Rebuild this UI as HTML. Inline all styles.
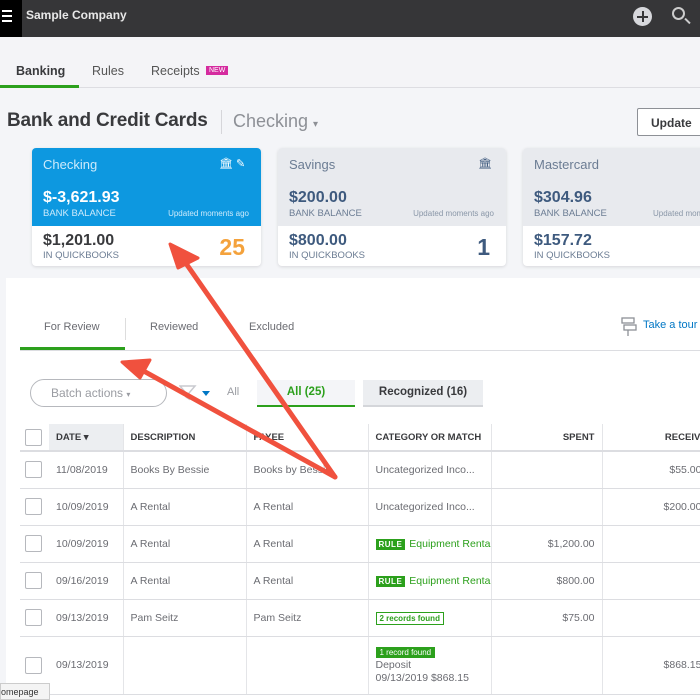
<!DOCTYPE html><html><head><style>
*{margin:0;padding:0;box-sizing:border-box}
html,body{width:700px;height:700px;overflow:hidden}
body{background:#f4f5f8;font-family:"Liberation Sans",sans-serif;position:relative;color:#393a3d}
.a{position:absolute}
.top{left:0;top:0;width:700px;height:37px;background:#363638}
.card{position:absolute;top:148px;height:118px;border-radius:4px;overflow:hidden;box-shadow:0 1px 3px rgba(0,0,0,.12);background:#fff}
.card .h{height:78px;background:#e8eaee;position:relative}
.card .t{position:absolute;left:11px;top:9px;font-size:13px;color:#6b7c93}
.card .b{position:absolute;left:11px;top:41px;font-size:16px;font-weight:bold;color:#3e5a7e}
.card .bl{position:absolute;left:11px;top:60px;font-size:9.5px;color:#6b7c93}
.card .u{position:absolute;right:12px;top:61px;font-size:8px;color:#8a97a8}
.card .q{position:absolute;left:11px;top:84px;font-size:16px;font-weight:bold;color:#3e5a7e}
.card .ql{position:absolute;left:11px;top:102px;font-size:9.5px;color:#6b7c93}
.card .n{position:absolute;right:16px;top:86px;font-size:23px;font-weight:bold;color:#3e5a7e}
table{border-collapse:collapse;table-layout:fixed;width:720px;position:absolute;left:20px;top:424px;font-size:10.5px;color:#6b6c72}
td,th{border-bottom:1px solid #dcdde1;border-right:1px solid #e4e5e8;padding:0 7px;text-align:left;white-space:nowrap;overflow:hidden}
th{height:27px;font-size:9.5px;color:#393a3d;font-weight:bold;border-bottom:2px solid #dcdde1}
td{height:37px}
.cb{width:17px;height:17px;border:1.5px solid #b6b8bd;border-radius:2px;display:inline-block;vertical-align:middle}
.r{text-align:right}
.rule{background:#2ca01c;color:#fff;font-size:8px;font-weight:bold;padding:1px 3px;margin-right:4px;letter-spacing:.5px}
.g{color:#2ca01c}
</style></head><body>
<div class="a top"></div>
<div class="a" style="left:0;top:0;width:22px;height:37px;background:#000"></div>
<div class="a" style="left:2px;top:10px;width:10px;height:2px;background:#fff;box-shadow:0 5px 0 #fff,0 10px 0 #fff"></div>
<div class="a" style="left:26px;top:8px;color:#e8e8e8;font-size:12px;font-weight:bold">Sample Company</div>
<div class="a" style="left:633px;top:7px;width:19px;height:19px;border-radius:50%;background:#d7d8dc"></div>
<div class="a" style="left:637px;top:15.5px;width:11px;height:2px;background:#363638"></div>
<div class="a" style="left:641.5px;top:11px;width:2px;height:11px;background:#363638"></div>
<div class="a" style="left:672px;top:7px;width:13px;height:13px;border:2px solid #ccc;border-radius:50%"></div>
<div class="a" style="left:684px;top:20px;width:7px;height:2px;background:#ccc;transform:rotate(45deg)"></div>

<div class="a" style="left:0;top:37px;width:700px;height:51px;background:#f4f4f7;border-bottom:1px solid #dddde2"></div>
<div class="a" style="left:16px;top:64px;font-size:12.5px;font-weight:bold">Banking</div>
<div class="a" style="left:0;top:85px;width:79px;height:3px;background:#2ca01c"></div>
<div class="a" style="left:92px;top:64px;font-size:12.5px;color:#555">Rules</div>
<div class="a" style="left:151px;top:64px;font-size:12.5px;color:#555">Receipts</div>
<div class="a" style="left:206px;top:66px;background:#d52b9f;color:#fff;font-size:7px;padding:1px 3px">NEW</div>

<div class="a" style="left:7px;top:110px;font-size:19px;font-weight:bold;letter-spacing:-0.2px">Bank and Credit Cards</div>
<div class="a" style="left:221px;top:110px;width:1px;height:24px;background:#d6d6da"></div>
<div class="a" style="left:233px;top:111px;font-size:18px;color:#8d9096">Checking <span style="font-size:10px">▾</span></div>
<div class="a" style="left:637px;top:108px;width:80px;height:28px;border:1px solid #8d9096;border-radius:2px;background:#fff;font-size:12px;font-weight:bold;padding:7px 0 0 13px">Update</div>

<div class="card" style="left:32px;width:229px">
 <div class="h" style="background:#0d98e0">
 <div class="t" style="color:#cdeafb">Checking</div>
 <div class="a" style="left:187px;top:9px;color:#fff;font-size:11px">🏛︎ ✎</div>
 <div class="b" style="color:#fff">$-3,621.93</div>
 <div class="bl" style="color:#cdeafb">BANK BALANCE</div>
 <div class="u" style="color:#cdeafb">Updated moments ago</div></div>
 <div class="q" style="color:#393a3d">$1,201.00</div><div class="ql">IN QUICKBOOKS</div>
 <div class="n" style="color:#f4a23c">25</div>
</div>
<div class="card" style="left:278px;width:228px">
 <div class="h"><div class="t">Savings</div><div class="a" style="left:200px;top:9px;color:#3e5a7e;font-size:11px">🏛︎</div>
 <div class="b">$200.00</div><div class="bl">BANK BALANCE</div><div class="u">Updated moments ago</div></div>
 <div class="q">$800.00</div><div class="ql">IN QUICKBOOKS</div><div class="n">1</div>
</div>
<div class="card" style="left:523px;width:228px">
 <div class="h"><div class="t">Mastercard</div>
 <div class="b">$304.96</div><div class="bl">BANK BALANCE</div><div class="u" style="right:auto;left:130px">Updated moments ago</div></div>
 <div class="q">$157.72</div><div class="ql">IN QUICKBOOKS</div>
</div>

<div class="a" style="left:6px;top:278px;width:694px;height:422px;background:#fff"></div>
<div class="a" style="left:44px;top:321px;font-size:11px;color:#6b6c72">For Review</div>
<div class="a" style="left:125px;top:318px;width:1px;height:22px;background:#ddd"></div>
<div class="a" style="left:150px;top:321px;font-size:11px;color:#6b6c72">Reviewed</div>
<div class="a" style="left:249px;top:321px;font-size:11px;color:#6b6c72">Excluded</div>
<div class="a" style="left:20px;top:350px;width:680px;height:1px;background:#dcdde1"></div>
<div class="a" style="left:20px;top:347px;width:105px;height:3px;background:#2ca01c"></div>
<svg class="a" style="left:620px;top:317px" width="20" height="20"><g fill="none" stroke="#8d9096" stroke-width="1.3"><rect x="2" y="1" width="12" height="5"/><rect x="4" y="8" width="12" height="5"/><line x1="8" y1="13" x2="8" y2="19"/></g></svg>
<div class="a" style="left:643px;top:319px;font-size:11px;color:#0077c5">Take a tour</div>

<div class="a" style="left:30px;top:379px;width:137px;height:28px;border:1.5px solid #b6b8bd;border-radius:14px;font-size:12px;color:#9a9ca2;padding:6px 0 0 20px">Batch actions <span style="font-size:8px">▾</span></div>
<svg class="a" style="left:179px;top:385px" width="18" height="16"><path d="M1 1h15l-6 7v6l-3-2V8z" fill="none" stroke="#c9cacf" stroke-width="1.5"/></svg>
<div class="a" style="left:202px;top:391px;width:0;height:0;border-left:4px solid transparent;border-right:4px solid transparent;border-top:5px solid #0077c5"></div>
<div class="a" style="left:227px;top:386px;font-size:11px;color:#9a9ca2">All</div>
<div class="a" style="left:257px;top:380px;width:98px;height:27px;background:#f4f5f8;border-bottom:2px solid #2ca01c;text-align:center;font-size:11.5px;font-weight:bold;color:#2ca01c;padding-top:6px">All (25)</div>
<div class="a" style="left:363px;top:380px;width:120px;height:27px;background:#eceef1;border-bottom:2px solid #d4d6da;text-align:center;font-size:11.5px;font-weight:bold;padding-top:6px">Recognized (16)</div>

<table>
<colgroup><col style="width:29px"><col style="width:74px"><col style="width:123px"><col style="width:122px"><col style="width:123px"><col style="width:111px"><col style="width:138px"></colgroup>
<tr><th style="border-right:none;padding:0 5px"><span class="cb"></span></th><th style="background:#eceef1">DATE ▾</th><th>DESCRIPTION</th><th>PAYEE</th><th>CATEGORY OR MATCH</th><th class="r">SPENT</th><th class="r" style="padding-right:26px">RECEIVED</th></tr>
<tr><td style="border-right:none;padding:0 5px"><span class="cb"></span></td><td>11/08/2019</td><td>Books By Bessie</td><td>Books by Bessie</td><td>Uncategorized Inco...</td><td></td><td class="r" style="padding-right:38px">$55.00</td></tr>
<tr><td style="border-right:none;padding:0 5px"><span class="cb"></span></td><td>10/09/2019</td><td>A Rental</td><td>A Rental</td><td>Uncategorized Inco...</td><td></td><td class="r" style="padding-right:38px">$200.00</td></tr>
<tr><td style="border-right:none;padding:0 5px"><span class="cb"></span></td><td>10/09/2019</td><td>A Rental</td><td>A Rental</td><td class="g" style="text-overflow:clip"><span class="rule">RULE</span>Equipment Rental</td><td class="r">$1,200.00</td><td></td></tr>
<tr><td style="border-right:none;padding:0 5px"><span class="cb"></span></td><td>09/16/2019</td><td>A Rental</td><td>A Rental</td><td class="g"><span class="rule">RULE</span>Equipment Rental</td><td class="r">$800.00</td><td></td></tr>
<tr><td style="border-right:none;padding:0 5px"><span class="cb"></span></td><td>09/13/2019</td><td>Pam Seitz</td><td>Pam Seitz</td><td><span style="border:1.5px solid #2ca01c;color:#2ca01c;font-size:8px;font-weight:bold;padding:1px 3px">2 records found</span></td><td class="r">$75.00</td><td></td></tr>
<tr><td style="height:58px;border-right:none;padding:0 5px"><span class="cb"></span></td><td>09/13/2019</td><td></td><td></td><td style="line-height:13px"><span style="background:#2ca01c;color:#fff;font-size:8px;padding:1px 4px">1 record found</span><br>Deposit<br>09/13/2019 $868.15</td><td></td><td class="r" style="padding-right:38px">$868.15</td></tr>
</table>
<div class="a" style="left:0;top:683px;width:50px;height:17px;background:#f4f4f4;border:1px solid #ccc;font-size:9px;padding:3px 0 0 0;color:#333">omepage</div>

<svg class="a" style="left:0;top:0" width="700" height="700"><g fill="#f0513e" stroke="#f0513e" stroke-width="5" stroke-linecap="round">
<line x1="335" y1="477" x2="185" y2="262"/><line x1="335" y1="477" x2="140" y2="369"/>
<polygon points="170,244 198,258 178,268" stroke-width="3" stroke-linejoin="round"/>
<polygon points="122,362 150,360 140,378" stroke-width="3" stroke-linejoin="round"/></g></svg>
</body></html>
